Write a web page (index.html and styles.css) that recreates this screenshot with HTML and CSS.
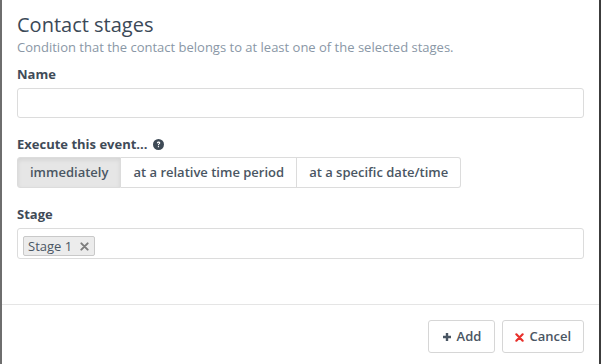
FILE: index.html
```html
<!DOCTYPE html>
<html>
<head>
<meta charset="utf-8">
<link rel="stylesheet" href="styles.css">
</head>
<body>
<div class="modal">
  <div class="modal-body">
    <h1 class="title">Contact stages</h1>
    <p class="subtitle">Condition that the contact belongs to at least one of the selected stages.</p>

    <div class="field">
      <label class="label">Name</label>
      <div class="input"></div>
    </div>

    <div class="field">
      <label class="label">Execute this event...
        <svg class="help" viewBox="0 0 16 16" width="11" height="11"><circle cx="8" cy="8" r="8" fill="#3e4a56"/><path d="M5.6 6.1c0-1.4 1.1-2.3 2.5-2.3 1.5 0 2.5.9 2.5 2.1 0 1-.6 1.5-1.3 1.9-.5.3-.6.5-.6.9v.4H7.1v-.5c0-.9.4-1.3 1-1.7.5-.3.8-.5.8-.9 0-.4-.3-.7-.8-.7-.5 0-.8.3-.9.8z" fill="#fff"/><rect x="7.1" y="10.3" width="1.7" height="1.7" fill="#fff"/></svg>
      </label>
      <div class="btn-group">
        <span class="seg active">immediately</span><span class="seg">at a relative time period</span><span class="seg">at a specific date/time</span>
      </div>
    </div>

    <div class="field">
      <label class="label">Stage</label>
      <div class="select">
        <span class="tag">Stage 1 <svg class="tag-x" viewBox="0 0 10 10" width="9" height="9"><path d="M1.5 1.5l7 7M8.5 1.5l-7 7" stroke="#7d7d7d" stroke-width="2.2" stroke-linecap="round"/></svg></span>
      </div>
    </div>
  </div>
  <div class="modal-footer">
    <span class="btn btn-add"><svg class="ico" viewBox="0 0 10 10" width="10" height="10"><path d="M5 1v8M1 5h8" stroke="#4a5663" stroke-width="2.4"/></svg>Add</span>
    <span class="btn"><svg class="ico" viewBox="0 0 10 10" width="9" height="9"><path d="M1.5 1.5l7 7M8.5 1.5l-7 7" stroke="#e8302b" stroke-width="2.4" stroke-linecap="round"/></svg>Cancel</span>
  </div>
</div>
</body>
</html>
```
FILE: styles.css
```css
html, body {
  margin: 0;
  padding: 0;
  background: #fff;
}
body {
  font-family: "Open Sans", "Liberation Sans", sans-serif;
  color: #4a5663;
}
.modal {
  height: 364px;
  box-sizing: border-box;
  border-left: 2px solid #6e6e6e;
  border-right: 2px solid #3c3c3c;
  display: flex;
  flex-direction: column;
}
.modal-body {
  padding: 12px 15px 0 15px;
  height: 292px;
}
.title {
  margin: 0;
  font-size: 20px;
  line-height: 26px;
  font-weight: 400;
  color: #3b4957;
}
.subtitle {
  margin: 0;
  font-size: 13px;
  line-height: 18px;
  color: #8a97a6;
}
.field {
  margin-top: 8px;
}
.field + .field {
  margin-top: 16px;
}
.label {
  display: block;
  font-size: 13px;
  font-weight: 700;
  line-height: 20px;
  margin-bottom: 4px;
  color: #3f4b58;
}
.help {
  vertical-align: -1px;
  margin-left: 2px;
}
.input {
  height: 30px;
  box-sizing: border-box;
  border: 1px solid #dcdcdc;
  border-radius: 3px;
}
.btn-group {
  display: flex;
  margin-top: -1px;
}
.seg {
  height: 31px;
  box-sizing: border-box;
  border: 1px solid #dcdcdc;
  padding: 0 12px;
  font-size: 13px;
  font-weight: 600;
  line-height: 29px;
  color: #4a5663;
}
.seg + .seg {
  border-left: none;
}
.seg:first-child {
  border-radius: 3px 0 0 3px;
}
.seg:last-child {
  border-radius: 0 3px 3px 0;
}
.seg.active {
  background: #e6e6e6;
  box-shadow: inset 0 2px 4px rgba(0,0,0,0.08);
}
.select {
  height: 31px;
  box-sizing: border-box;
  border: 1px solid #dcdcdc;
  border-radius: 3px;
  padding: 5px 5px;
}
.tag {
  display: inline-block;
  height: 20px;
  box-sizing: border-box;
  background: #ececec;
  border: 1px solid #c9c9c9;
  border-radius: 2px;
  padding: 0 5px 0 4px;
  font-size: 13px;
  line-height: 18px;
  color: #4a5663;
}
.tag-x {
  margin-left: 4px;
  vertical-align: 0;
}
.modal-footer {
  border-top: 1px solid #e5e5e5;
  padding: 15px 15px 0 0;
  display: flex;
  justify-content: flex-end;
  gap: 7px;
}
.btn {
  height: 33px;
  box-sizing: border-box;
  border: 1px solid #d6d6d6;
  border-radius: 3px;
  padding: 0 12px;
  font-size: 13px;
  font-weight: 600;
  line-height: 31px;
  color: #4a5663;
}
.btn-add {
  padding: 0 13px;
}
.ico {
  margin-right: 5px;
  vertical-align: -1px;
}
```
